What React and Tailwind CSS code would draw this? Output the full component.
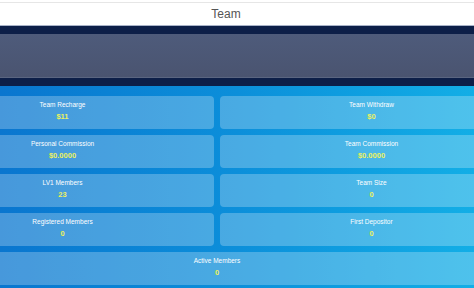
const stats = [
  { label: 'Team Recharge', value: '$11' },
  { label: 'Team Withdraw', value: '$0' },
  { label: 'Personal Commission', value: '$0.0000' },
  { label: 'Team Commission', value: '$0.0000' },
  { label: 'LV1 Members', value: '23' },
  { label: 'Team Size', value: '0' },
  { label: 'Registered Members', value: '0' },
  { label: 'First Depositor', value: '0' },
];

function StatCard({ label, value, wide }) {
  return (
    <div
      className={`h-[33px] rounded-[4px] bg-white/25 flex flex-col items-center justify-center pb-[3px] ${
        wide ? 'col-span-2' : ''
      }`}
    >
      <span className="text-[6.5px] leading-[8px] text-white">{label}</span>
      <span className="mt-[3px] text-[7.5px] leading-[9px] font-bold text-[#ecf25c]">{value}</span>
    </div>
  );
}

export default function App() {
  return (
    <div className="w-[474px] h-[288px] overflow-hidden bg-white font-['Liberation_Sans',Arial,sans-serif]">
      <div className="h-[2px] bg-white" />
      <header className="h-[24px] border-t border-b border-t-[#e6e6e6] border-b-[#a9b3c8] bg-white flex items-center justify-center pr-[22px]">
        <h1 className="text-[12px] text-[#555]">Team</h1>
      </header>
      <div className="bg-[#0d1f48] pt-[8px] pb-[8px]">
        <div className="h-[44px] bg-gradient-to-b from-[#4e5b7b] to-[#4a5470] border-b border-[#5a6580]" />
      </div>
      <section className="h-[202px] bg-gradient-to-r from-[#0a76cf] via-[#0c8fda] to-[#13aee6] pt-[10px]">
        <div className="ml-[-89px] w-[612px] grid grid-cols-2 gap-[6px]">
          {stats.map((s) => (
            <StatCard key={s.label} label={s.label} value={s.value} />
          ))}
          <StatCard label="Active Members" value="0" wide />
        </div>
      </section>
    </div>
  );
}
